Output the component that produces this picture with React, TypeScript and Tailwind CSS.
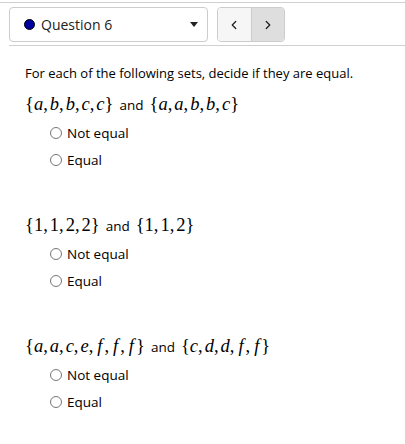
import { ChevronLeft, ChevronRight } from "lucide-react";

const sans = { fontFamily: '"Open Sans", "Liberation Sans", sans-serif' };

type Part = { t: string; i?: boolean };

function MathSet({ items }: { items: Part[] }) {
  return (
    <span className="font-['Liberation_Serif',serif] text-[18.5px] text-black">
      {"{"}
      {items.map((p, idx) => (
        <span key={idx}>
          <span className={p.t === "f" ? "mx-[2px] italic" : p.i ? "italic" : ""}>{p.t}</span>
          {idx < items.length - 1 ? <span className="mr-[2px]">,</span> : null}
        </span>
      ))}
      {"}"}
    </span>
  );
}

const letters = (s: string) => s.split("").map((t) => ({ t, i: true }));
const nums = (s: string) => s.split("").map((t) => ({ t }));

const questions = [
  { left: letters("abbcc"), right: letters("aabbc") },
  { left: nums("1122"), right: nums("112") },
  { left: letters("aacefff"), right: letters("cddff") },
];

function Radio({ label }: { label: string }) {
  return (
    <label className="flex h-[18px] items-center gap-[5px] text-[13.5px] text-black">
      <span className="h-[12px] w-[12px] rounded-full border border-[#767676] bg-white" />
      {label}
    </label>
  );
}

export default function App() {
  return (
    <div className="h-[444px] w-[405px] bg-white" style={sans}>
      <div className="mt-[2px] border-t border-[#d0d0d0]" />
      <div className="ml-[9px] flex items-center gap-[9px] pt-[4px] pb-[3px]">
        <div className="flex h-[35px] w-[199px] items-center rounded-[4px] border border-[#cccccc] pl-[14px] pr-[9px]">
          <span className="h-[11px] w-[11px] rounded-full border border-black bg-[#0000a0]" />
          <span className="ml-[6px] flex-1 text-[14px] text-[#222]">Question 6</span>
          <svg width="8" height="5" viewBox="0 0 8 5">
            <path d="M0 0 L8 0 L4 5 Z" fill="#222" />
          </svg>
        </div>
        <div className="flex h-[35px] w-[68px] overflow-hidden rounded-[4px] border border-[#cccccc]">
          <button className="flex flex-1 items-center justify-center border-r border-[#cccccc] bg-[#f6f6f6]">
            <ChevronLeft size={14} strokeWidth={2.2} color="#222" />
          </button>
          <button className="flex flex-1 items-center justify-center bg-[#dedede]">
            <ChevronRight size={14} strokeWidth={2.2} color="#222" />
          </button>
        </div>
      </div>
      <div className="ml-[9px] border-t border-[#d0d0d0]" />

      <div className="pl-[25px] pt-[17px]">
        <p className="text-[13px] leading-[20px] text-black">For each of the following sets, decide if they are equal.</p>
        <div className="mt-[11px] flex flex-col gap-[46px]">
          {questions.map((q, i) => (
            <div key={i}>
              <div className="flex h-[22px] items-center gap-[6px]">
                <MathSet items={q.left} />
                <span className="text-[13.5px] text-black">and</span>
                <MathSet items={q.right} />
              </div>
              <div className="mt-[8px] flex flex-col gap-[9px] pl-[25px]">
                <Radio label="Not equal" />
                <Radio label="Equal" />
              </div>
            </div>
          ))}
        </div>
      </div>
    </div>
  );
}
